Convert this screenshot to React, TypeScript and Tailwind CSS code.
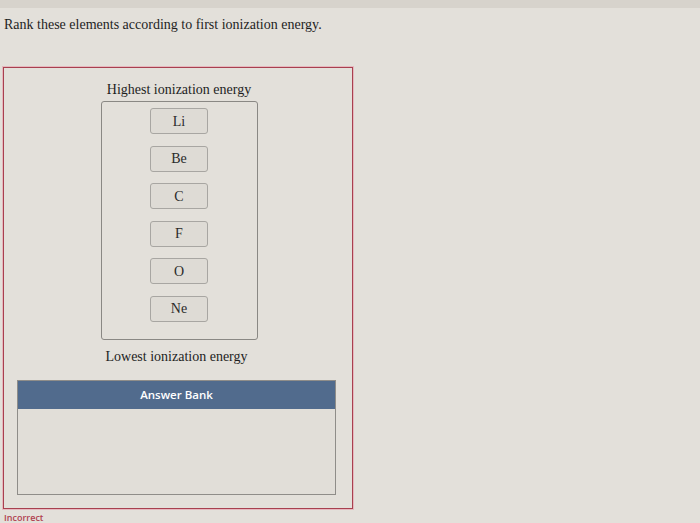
import React from "react";

const serif = { fontFamily: '"Liberation Serif", "Times New Roman", serif' };
const sans = { fontFamily: '"Open Sans", "Liberation Sans", sans-serif' };

const items = ["Li", "Be", "C", "F", "O", "Ne"];

export default function App() {
  return (
    <div className="w-[700px] h-[523px] overflow-hidden bg-[#e3e0da] relative">
      <div className="h-[8px] bg-[#d7d3cc]" />
      <div className="pl-[4px] pt-[8px] text-[14px] leading-[18px] text-[#1e1e1e]" style={serif}>
        Rank these elements according to first ionization energy.
      </div>
      <div className="ml-[3px] mt-[33px] w-[350px] h-[442px] border border-[#a8404f] shadow-[0_0_0_1px_#e6b8be] flex flex-col items-center">
        <div className="mt-[13px] ml-[2px] text-[14px] leading-[18px] text-[#1e1e1e]" style={serif}>
          Highest ionization energy
        </div>
        <div className="mt-[2px] ml-[2px] w-[157px] h-[239px] border border-[#8a8884] rounded-[3px] flex flex-col items-center pt-[6px] gap-[11.5px]">
          {items.map((t) => (
            <div
              key={t}
              className="w-[58px] h-[26px] border border-[#a8a6a2] rounded-[3px] bg-[#dedbd5] flex items-center justify-center text-[14px] text-[#2a2a2a]"
              style={serif}
            >
              {t}
            </div>
          ))}
        </div>
        <div className="mt-[8px] ml-[-3px] text-[14px] leading-[18px] text-[#1e1e1e]" style={serif}>
          Lowest ionization energy
        </div>
        <div className="mt-[14px] w-[319px] ml-[-3px] border border-[#8f8d89]">
          <div className="h-[28px] bg-[#516b8d] flex items-center justify-center text-white text-[11.5px] font-semibold" style={sans}>
            Answer Bank
          </div>
          <div className="h-[85px] bg-[#e1ded8]" />
        </div>
      </div>
      <div className="pl-[4px] mt-[3px] text-[9px] leading-[12px] text-[#b0404f] font-semibold" style={sans}>
        Incorrect
      </div>
    </div>
  );
}
